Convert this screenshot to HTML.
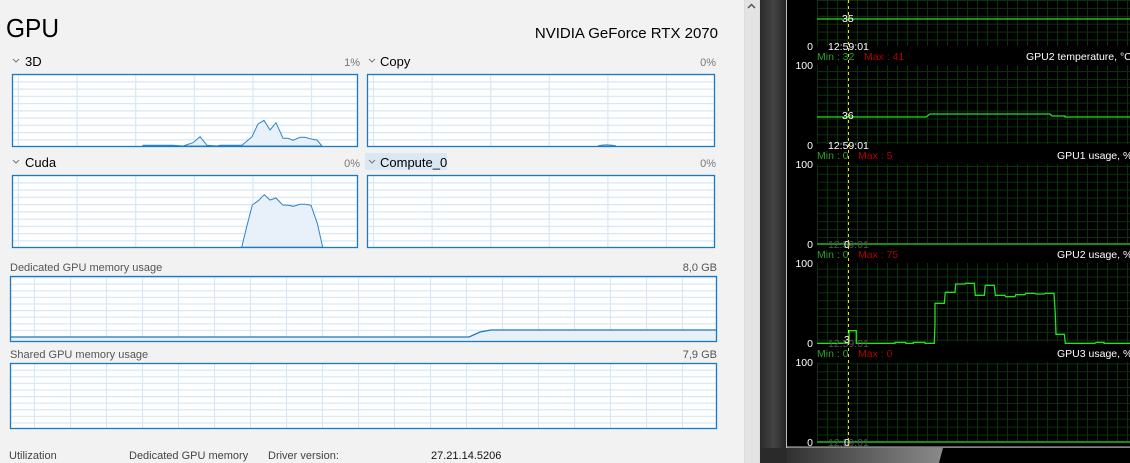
<!DOCTYPE html>
<html><head><meta charset="utf-8"><style>
html,body{margin:0;padding:0;width:1130px;height:463px;overflow:hidden;background:#f2f2f2}
svg{display:block}
text{font-family:"Liberation Sans",sans-serif}
</style></head><body>
<svg width="1130" height="463" viewBox="0 0 1130 463" xmlns="http://www.w3.org/2000/svg">
<defs>
<pattern id="sg" x="12" y="74" width="58.6" height="7.25" patternUnits="userSpaceOnUse">
<line x1="6.5" y1="0" x2="6.5" y2="8" stroke="#d6e7f5" stroke-width="1.2"/>
<line x1="0" y1="0.6" x2="60" y2="0.6" stroke="#d6e7f5" stroke-width="1.2"/>
</pattern>
<pattern id="sg2" x="368" y="74" width="58.6" height="7.25" patternUnits="userSpaceOnUse">
<line x1="5.5" y1="0" x2="5.5" y2="8" stroke="#d6e7f5" stroke-width="1.2"/>
<line x1="0" y1="0.6" x2="60" y2="0.6" stroke="#d6e7f5" stroke-width="1.2"/>
</pattern>
<pattern id="sg3" x="12" y="175" width="58.6" height="7.25" patternUnits="userSpaceOnUse">
<line x1="6.5" y1="0" x2="6.5" y2="8" stroke="#d6e7f5" stroke-width="1.2"/>
<line x1="0" y1="0.6" x2="60" y2="0.6" stroke="#d6e7f5" stroke-width="1.2"/>
</pattern>
<pattern id="sg4" x="368" y="175" width="58.6" height="7.25" patternUnits="userSpaceOnUse">
<line x1="5.5" y1="0" x2="5.5" y2="8" stroke="#d6e7f5" stroke-width="1.2"/>
<line x1="0" y1="0.6" x2="60" y2="0.6" stroke="#d6e7f5" stroke-width="1.2"/>
</pattern>
<pattern id="mg" x="-2" y="277" width="36" height="6.6" patternUnits="userSpaceOnUse">
<line x1="0.5" y1="0" x2="0.5" y2="7" stroke="#d6e7f5" stroke-width="1.2"/>
<line x1="0" y1="0.6" x2="36" y2="0.6" stroke="#d6e7f5" stroke-width="1.2"/>
</pattern>
<pattern id="mg2" x="-2" y="363" width="36" height="6.6" patternUnits="userSpaceOnUse">
<line x1="0.5" y1="0" x2="0.5" y2="7" stroke="#d6e7f5" stroke-width="1.2"/>
<line x1="0" y1="0.6" x2="36" y2="0.6" stroke="#d6e7f5" stroke-width="1.2"/>
</pattern>
<pattern id="gg" x="817" y="0" width="10" height="7.9" patternUnits="userSpaceOnUse">
<line x1="0.5" y1="0" x2="0.5" y2="8" stroke="#0a330a" stroke-width="1"/>
<line x1="0" y1="0.5" x2="10" y2="0.5" stroke="#0a330a" stroke-width="1"/>
</pattern>
<linearGradient id="bz" x1="0" y1="0" x2="1" y2="0"><stop offset="0" stop-color="#2a2a2a"/><stop offset="0.5" stop-color="#444"/><stop offset="1" stop-color="#222"/></linearGradient>
<linearGradient id="bb" x1="0" y1="0" x2="1" y2="0"><stop offset="0" stop-color="#222"/><stop offset="1" stop-color="#8a8a8a"/></linearGradient>
</defs>

<rect x="0" y="0" width="744" height="463" fill="#f2f2f2"/>
<text x="6" y="37" font-size="26" fill="#000" textLength="53" lengthAdjust="spacingAndGlyphs">GPU</text>
<text x="718" y="38" font-size="15" fill="#000" text-anchor="end">NVIDIA GeForce RTX 2070</text>

<path d="M13 59 l3 3 l3 -3" fill="none" stroke="#777" stroke-width="1"/>
<text x="25" y="66" font-size="13" fill="#000">3D</text>
<text x="360" y="66" font-size="11" fill="#777" text-anchor="end">1%</text>
<rect x="12.5" y="74.5" width="345" height="72" fill="#fff" stroke="none"/>
<rect x="12.5" y="74.5" width="345" height="72" fill="url(#sg)"/>
<path d="M143 146 L143 145.3 L173 145.3 L183 146 L193 142.7 L200 136.7 L207 145.3 L217 146 L220 145.3 L242 145.3 L252 136.7 L258 124 L264 120.3 L270 130 L276 122.7 L283 138.3 L288 138.3 L293 140.3 L300 137.3 L305 137.3 L312 139.3 L317 140 L322 146 Z" fill="#e8f1f9" stroke="#2f84c8" stroke-width="1"/>
<rect x="12.5" y="74.5" width="345" height="72" fill="none" stroke="#1879c7" stroke-width="1.3"/>

<path d="M369 59 l3 3 l3 -3" fill="none" stroke="#777" stroke-width="1"/>
<text x="380" y="66" font-size="13" fill="#000">Copy</text>
<text x="716" y="66" font-size="11" fill="#777" text-anchor="end">0%</text>
<rect x="367.5" y="74.5" width="347" height="72" fill="#fff"/>
<rect x="367.5" y="74.5" width="347" height="72" fill="url(#sg2)"/>
<path d="M598 146 Q606 144 616 146" fill="none" stroke="#2f84c8" stroke-width="1.2"/>
<rect x="367.5" y="74.5" width="347" height="72" fill="none" stroke="#1879c7" stroke-width="1.3"/>

<path d="M13 160 l3 3 l3 -3" fill="none" stroke="#777" stroke-width="1"/>
<text x="25" y="167" font-size="13" fill="#000">Cuda</text>
<text x="360" y="167" font-size="11" fill="#777" text-anchor="end">0%</text>
<rect x="12.5" y="175.5" width="345" height="72" fill="#fff"/>
<rect x="12.5" y="175.5" width="345" height="72" fill="url(#sg3)"/>
<path d="M241.7 247.3 L246.7 226.7 L252.3 205 L258.3 200.7 L264.3 194.7 L270 200 L276 198 L282.7 205 L288.3 205.3 L293.3 206.3 L300 204.3 L305 204.3 L311 205.3 L317.3 223.3 L322.7 247.3 Z" fill="#e8f1f9" stroke="#2f84c8" stroke-width="1"/>
<rect x="12.5" y="175.5" width="345" height="72" fill="none" stroke="#1879c7" stroke-width="1.3"/>

<rect x="365" y="153" width="82" height="17" fill="#dbe7f2"/>
<path d="M369 160 l3 3 l3 -3" fill="none" stroke="#777" stroke-width="1"/>
<text x="380" y="167" font-size="13" fill="#000">Compute_0</text>
<text x="716" y="167" font-size="11" fill="#777" text-anchor="end">0%</text>
<rect x="367.5" y="175.5" width="347" height="72" fill="#fff"/>
<rect x="367.5" y="175.5" width="347" height="72" fill="url(#sg4)"/>
<rect x="367.5" y="175.5" width="347" height="72" fill="none" stroke="#1879c7" stroke-width="1.3"/>

<text x="10" y="271" font-size="11" fill="#555">Dedicated GPU memory usage</text>
<text x="717" y="271" font-size="11" fill="#555" text-anchor="end">8,0 GB</text>
<rect x="10.5" y="276.5" width="706" height="65" fill="#fff"/>
<rect x="10.5" y="276.5" width="706" height="65" fill="url(#mg)"/>
<path d="M11 337 L469 337 L480 332 L491 330 L716 330 L716 341 L11 341 Z" fill="#e8f1f9"/>
<path d="M11 337 L469 337 L480 332 L491 330 L716 330" fill="none" stroke="#2076bf" stroke-width="1.3"/>
<rect x="10.5" y="276.5" width="706" height="65" fill="none" stroke="#1879c7" stroke-width="1.3"/>

<text x="10" y="358" font-size="11" fill="#555">Shared GPU memory usage</text>
<text x="717" y="358" font-size="11" fill="#555" text-anchor="end">7,9 GB</text>
<rect x="10.5" y="363.5" width="706" height="65" fill="#fff"/>
<rect x="10.5" y="363.5" width="706" height="65" fill="url(#mg2)"/>
<rect x="10.5" y="363.5" width="706" height="65" fill="none" stroke="#1879c7" stroke-width="1.3"/>

<text x="9" y="459" font-size="11" fill="#444">Utilization</text>
<text x="129" y="459" font-size="11" fill="#444">Dedicated GPU memory</text>
<text x="268" y="459" font-size="11" fill="#444">Driver version:</text>
<text x="431" y="459" font-size="11" fill="#111">27.21.14.5206</text>

<rect x="744" y="0" width="16" height="463" fill="#dcdcdc"/>
<rect x="745" y="0" width="14" height="463" fill="#e3e3e3"/>
<path d="M748 8 l3.5 -3.5 l3.5 3.5" fill="none" stroke="#555" stroke-width="1.5"/>

<rect x="760" y="0" width="370" height="463" fill="#000"/>
<rect x="760" y="0" width="27" height="463" fill="url(#bz)"/>
<rect x="786" y="0" width="1.2" height="448" fill="#bdbdbd"/>
<rect x="786" y="446.5" width="344" height="1.2" fill="#bdbdbd"/>
<path d="M760 448 L943 448 L939 463 L760 463 Z" fill="url(#bb)"/>
<rect x="760" y="448" width="27" height="15" fill="#2a2a2a"/>
<rect x="787" y="0" width="343" height="446" fill="#000"/>

<rect x="817" y="0" width="313" height="46" fill="url(#gg)"/>
<rect x="817" y="65" width="313" height="79" fill="url(#gg)"/>
<rect x="817" y="164" width="313" height="79" fill="url(#gg)"/>
<rect x="817" y="263" width="313" height="79" fill="url(#gg)"/>
<rect x="817" y="362" width="313" height="79" fill="url(#gg)"/>

<g font-size="10.5" fill="#fff">
<path d="M817 19 L1130 19" stroke="#22e022" stroke-width="1.3"/>
<text x="842" y="22" fill="#fff">35</text>
<text x="813" y="50" text-anchor="end">0</text>
<text x="828" y="50">12:59:01</text>
<text x="817" y="60" fill="#2aa02a">Min : 32</text>
<text x="864" y="60" fill="#b00000">Max : 41</text>
<text x="1026" y="60">GPU2 temperature, °C</text>
<text x="813" y="69" text-anchor="end">100</text>

<path d="M817 117 L926 117 L930 114 L1050 114 L1052 116 L1065 116 L1065 117 L1130 117" fill="none" stroke="#22e022" stroke-width="1.3"/>
<text x="842" y="119">36</text>
<text x="813" y="149" text-anchor="end">0</text>
<text x="828" y="149">12:59:01</text>
<text x="817" y="159" fill="#2aa02a">Min : 0</text>
<text x="858" y="159" fill="#b00000">Max : 5</text>
<text x="1057" y="159">GPU1 usage, %</text>
<text x="813" y="168" text-anchor="end">100</text>

<path d="M817 244 L1130 244" stroke="#22e022" stroke-width="1.3"/>
<text x="813" y="248" text-anchor="end">0</text>
<text x="828" y="248" fill="#555">12:59:01</text>
<text x="844" y="248">0</text>
<text x="817" y="258" fill="#2aa02a">Min : 0</text>
<text x="858" y="258" fill="#b00000">Max : 75</text>
<text x="1057" y="258">GPU2 usage, %</text>
<text x="813" y="267" text-anchor="end">100</text>

<path d="M817 343.3 L849 343.3 L849 330.7 L856.3 330.7 L856.3 343.3 L895 343.3 L895 342.3 L905.7 342.3 L905.7 343.3 L913.3 343.3 L913.3 342.3 L925 342.3 L925 343.3 L934.3 343.3 L935 323.3 L935 303.3 L944.3 303.3 L945.3 292.3 L955 292.3 L955.7 284 L965 284 L965.7 283.3 L974.3 283.3 L975.3 295.3 L984.3 295.3 L985.3 285.3 L994.3 285.3 L995.3 295.3 L1005 295.3 L1005.7 296.7 L1015 296.7 L1015.7 294.7 L1025 294.7 L1025.7 293.3 L1034.7 293.3 L1035.7 294 L1044.3 294 L1045.3 293.3 L1054 293.3 L1055.3 314 L1056 334.3 L1064.3 334.3 L1065.3 343.3 L1095 343.3 L1096 342.3 L1104 342.3 L1104 343.3 L1130 343.3" fill="none" stroke="#22e022" stroke-width="1.3"/>
<text x="813" y="347" text-anchor="end">0</text>
<text x="828" y="347" fill="#555">12:59:01</text>
<text x="844" y="343">3</text>
<text x="817" y="357" fill="#2aa02a">Min : 0</text>
<text x="858" y="357" fill="#b00000">Max : 0</text>
<text x="1057" y="357">GPU3 usage, %</text>
<text x="813" y="366" text-anchor="end">100</text>

<path d="M817 442 L1130 442" stroke="#22e022" stroke-width="1.3"/>
<text x="813" y="446" text-anchor="end">0</text>
<text x="828" y="446" fill="#555">12:59:01</text>
<text x="844" y="446">0</text>
</g>
<line x1="848.5" y1="0" x2="848.5" y2="446" stroke="#f0e020" stroke-width="1" stroke-dasharray="3,3"/>
</svg>
</body></html>
